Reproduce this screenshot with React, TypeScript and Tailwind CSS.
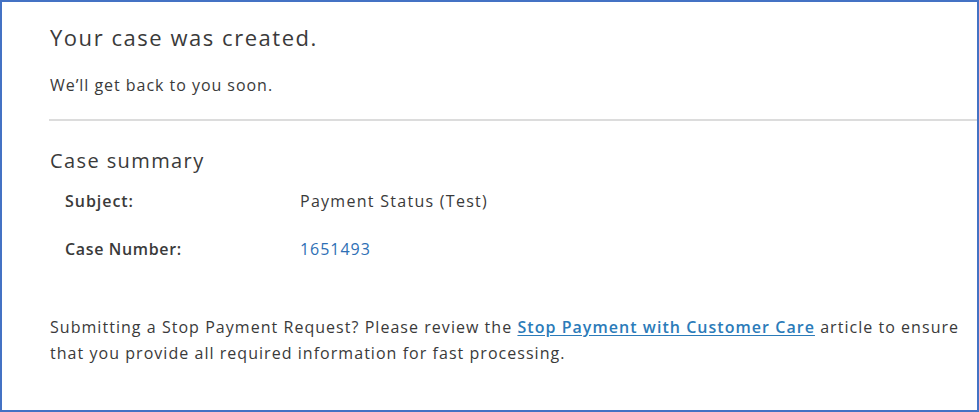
export default function App() {
  return (
    <div className="w-[979px] h-[412px] border-2 border-[#4472c4] bg-white font-['Open_Sans',sans-serif] tracking-[0.06em] text-[#3a3a3a]">
      <div className="pl-[48px] pt-[20px]">
        <h1 className="text-[22px] leading-[30px] tracking-[0.07em]">Your case was created.</h1>
        <p className="mt-[22px] text-[16px] leading-[22px]">We’ll get back to you soon.</p>
      </div>

      <div className="ml-[47px] mt-[23px] h-[2px] bg-[#dcdcdc]" />

      <div className="pl-[48px] pt-[27px]">
        <h2 className="text-[20px] leading-[26px] tracking-[0.07em]">Case summary</h2>
        <div className="mt-[16px] pl-[15px] flex flex-col gap-[26px] text-[16px] leading-[22px]">
          <div className="flex">
            <span className="w-[235px] font-semibold">Subject:</span>
            <span className="tracking-[0.08em]">Payment Status (Test)</span>
          </div>
          <div className="flex">
            <span className="w-[235px] font-semibold tracking-[0.04em]">Case Number:</span>
            <span className="text-[#2e6fb5]">1651493</span>
          </div>
        </div>

        <p className="mt-[54px] pr-[12px] text-[16px] leading-[26px] tracking-[0.065em]">
          Submitting a Stop Payment Request? Please review the{" "}
          <a href="#" className="font-semibold text-[#2b7bb9] underline underline-offset-2">
            Stop Payment with Customer Care
          </a>{" "}
          article to ensure that you provide all required information for fast processing.
        </p>
      </div>
    </div>
  )
}
